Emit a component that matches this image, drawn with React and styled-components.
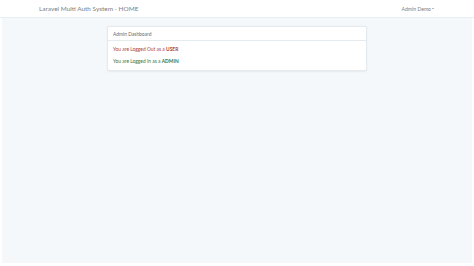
import React from 'react';
import styled, { createGlobalStyle } from 'styled-components';

const Global = createGlobalStyle`
  html, body {
    margin: 0;
    padding: 0;
    background: #fff;
  }
  body {
    font-family: Lato, "Open Sans", sans-serif;
    color: #636b6f;
  }
`

const Page = styled.div`
  height: 263px;
  background: #f5f8fa;
  margin: 0 2px 0 2px;
  display: flex;
  flex-direction: column;
`

const Navbar = styled.nav`
  height: 17px;
  background: #fff;
  border-bottom: 1px solid #e8eef2;
  margin: 0 -2px;
`

const Container = styled.div`
  width: 396px;
  margin: 0 auto;
  padding: 0 5px;
  height: 100%;
  display: flex;
  align-items: center;
  justify-content: space-between;
`

const Brand = styled.span`
  font-size: 6.45px;
  color: #7d7d7d;
`

const UserMenu = styled.span`
  font-size: 5.1px;
  color: #7d7d7d;
  display: flex;
  align-items: center;
  gap: 1px;
  margin-right: 1px;
`

const Caret = styled.span`
  display: inline-block;
  width: 0;
  height: 0;
  border-top: 1.5px solid #777;
  border-left: 1.5px solid transparent;
  border-right: 1.5px solid transparent;
`

const Card = styled.div`
  width: 258px;
  margin: 8px 0 0 105px;
  background: #fff;
  border: 1px solid #e4eaee;
  border-radius: 2px;
  box-shadow: 0 0.5px 2px rgba(0, 0, 0, 0.06);
`

const CardHeader = styled.div`
  height: 13px;
  padding: 0 5px;
  display: flex;
  align-items: center;
  font-size: 4.9px;
  color: #636b6f;
  border-bottom: 1px solid #e4eaee;
`

const CardBody = styled.div`
  padding: 4px 5px 5px;
  display: flex;
  flex-direction: column;
  gap: 4px;
`

const Status = styled.p`
  margin: 0;
  font-size: 4.9px;
  line-height: 8px;
  color: ${p => p.$tone === 'out' ? '#a94442' : '#3c763d'};
  b {
    font-weight: 700;
  }
`

export default function App() {
  return (
    <>
      <Global />
      <Page>
        <Navbar>
          <Container>
            <Brand>Laravel Multi Auth System - HOME</Brand>
            <UserMenu>Admin Demo <Caret /></UserMenu>
          </Container>
        </Navbar>
        <Card>
          <CardHeader>Admin Dashboard</CardHeader>
          <CardBody>
            <Status $tone="out">You are Logged Out as a <b>USER</b></Status>
            <Status $tone="in">You are Logged In as a <b>ADMIN</b></Status>
          </CardBody>
        </Card>
      </Page>
    </>
  );
}
